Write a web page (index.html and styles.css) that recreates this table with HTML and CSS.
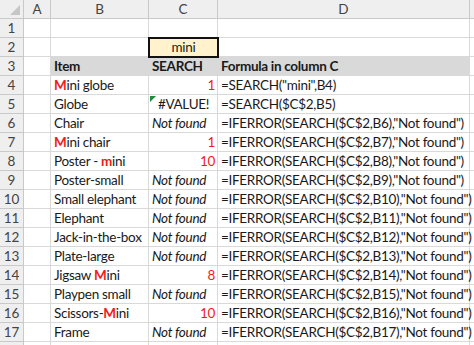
FILE: index.html
```html
<!DOCTYPE html>
<html lang="en">
<head>
    <meta charset="UTF-8">
    <title>SEARCH function</title>
    <link rel="stylesheet" href="styles.css">
</head>
<body>
    <div class="sheet">
        <!-- column headers -->
        <div class="hd corner"></div>
        <div class="hd">A</div>
        <div class="hd">B</div>
        <div class="hd">C</div>
        <div class="hd">D</div>
        <div class="hd"></div>

        <div class="rn">1</div><div class="c"></div><div class="c"></div><div class="c"></div><div class="c"></div><div class="c"></div>

        <div class="rn">2</div><div class="c"></div><div class="c"></div><div class="c key">mini</div><div class="c"></div><div class="c"></div>

        <div class="rn">3</div><div class="c"></div><div class="c th">Item</div><div class="c th">SEARCH</div><div class="c th">Formula in column C</div><div class="c"></div>

        <div class="rn">4</div><div class="c"></div><div class="c"><b class="hit">M</b>ini globe</div><div class="c num">1</div><div class="c">=SEARCH("mini",B4)</div><div class="c"></div>

        <div class="rn">5</div><div class="c"></div><div class="c">Globe</div><div class="c err">#VALUE!</div><div class="c">=SEARCH($C$2,B5)</div><div class="c"></div>

        <div class="rn">6</div><div class="c"></div><div class="c">Chair</div><div class="c miss">Not found</div><div class="c">=IFERROR(SEARCH($C$2,B6),"Not found")</div><div class="c"></div>

        <div class="rn">7</div><div class="c"></div><div class="c"><b class="hit">M</b>ini chair</div><div class="c num">1</div><div class="c">=IFERROR(SEARCH($C$2,B7),"Not found")</div><div class="c"></div>

        <div class="rn">8</div><div class="c"></div><div class="c">Poster - <b class="hit">m</b>ini</div><div class="c num">10</div><div class="c">=IFERROR(SEARCH($C$2,B8),"Not found")</div><div class="c"></div>

        <div class="rn">9</div><div class="c"></div><div class="c">Poster-small</div><div class="c miss">Not found</div><div class="c">=IFERROR(SEARCH($C$2,B9),"Not found")</div><div class="c"></div>

        <div class="rn">10</div><div class="c"></div><div class="c">Small elephant</div><div class="c miss">Not found</div><div class="c">=IFERROR(SEARCH($C$2,B10),"Not found")</div><div class="c"></div>

        <div class="rn">11</div><div class="c"></div><div class="c">Elephant</div><div class="c miss">Not found</div><div class="c">=IFERROR(SEARCH($C$2,B11),"Not found")</div><div class="c"></div>

        <div class="rn">12</div><div class="c"></div><div class="c">Jack-in-the-box</div><div class="c miss">Not found</div><div class="c">=IFERROR(SEARCH($C$2,B12),"Not found")</div><div class="c"></div>

        <div class="rn">13</div><div class="c"></div><div class="c">Plate-large</div><div class="c miss">Not found</div><div class="c">=IFERROR(SEARCH($C$2,B13),"Not found")</div><div class="c"></div>

        <div class="rn">14</div><div class="c"></div><div class="c">Jigsaw <b class="hit">M</b>ini</div><div class="c num">8</div><div class="c">=IFERROR(SEARCH($C$2,B14),"Not found")</div><div class="c"></div>

        <div class="rn">15</div><div class="c"></div><div class="c">Playpen small</div><div class="c miss">Not found</div><div class="c">=IFERROR(SEARCH($C$2,B15),"Not found")</div><div class="c"></div>

        <div class="rn">16</div><div class="c"></div><div class="c">Scissors-<b class="hit">M</b>ini</div><div class="c num">10</div><div class="c">=IFERROR(SEARCH($C$2,B16),"Not found")</div><div class="c"></div>

        <div class="rn">17</div><div class="c"></div><div class="c">Frame</div><div class="c miss">Not found</div><div class="c">=IFERROR(SEARCH($C$2,B17),"Not found")</div><div class="c"></div>

        <div class="rn"></div><div class="c"></div><div class="c"></div><div class="c"></div><div class="c"></div><div class="c"></div>
    </div>
</body>
</html>
```

FILE: styles.css
```css
body {
    margin: 0;
    background: #fff;
    font-family: Lato, "Liberation Sans", sans-serif;
    font-size: 13.5px;
    letter-spacing: -0.3px;
    color: #1a1a1a;
    overflow: hidden;
}
.sheet {
    display: grid;
    grid-template-columns: 24px 27px 98px 69px 252px 1fr;
    grid-auto-rows: 19px;
    width: 474px;
}
.c, .hd, .rn {
    border-right: 1px solid #d9d9d9;
    border-bottom: 1px solid #d9d9d9;
    line-height: 19px;
    white-space: nowrap;
    overflow: visible;
    padding: 0 2px 0 3px;
}
.hd, .rn {
    background: #efefef;
    color: #444;
    text-align: center;
    border-color: #c9c9c9;
    padding: 0;
    letter-spacing: 0;
}
.corner {
    position: relative;
}
/* little select-all triangle */
.corner::after {
    content: "";
    position: absolute;
    right: 3px;
    bottom: 3px;
    border-left: 10px solid transparent;
    border-bottom: 10px solid #c6c6c6;
}
.key {
    background: #fff2cc;
    outline: 2px solid #111;
    outline-offset: -1px;
    text-align: center;
    position: relative;
    z-index: 1;
}
.th {
    background: #d9d9d9;
    font-weight: bold;
    border-right-color: #d9d9d9;
}
.hit {
    color: #f01b1b;
}
.num {
    color: #f01b1b;
    text-align: right;
}
.err {
    text-align: center;
    position: relative;
}
/* green error marker */
.err::before {
    content: "";
    position: absolute;
    left: 1px;
    top: 1px;
    border-top: 6px solid #1e8a3a;
    border-right: 6px solid transparent;
}
.miss {
    font-style: italic;
}
```
